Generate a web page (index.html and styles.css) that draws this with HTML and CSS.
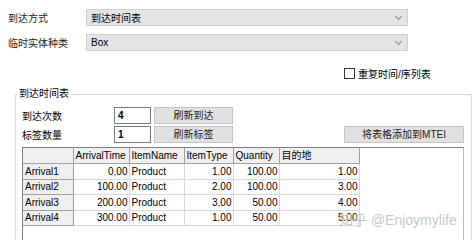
FILE: index.html
```html
<!DOCTYPE html>
<html lang="zh-CN">
<head>
    <meta charset="UTF-8">
    <title>到达时间表</title>
    <link rel="stylesheet" href="styles.css">
</head>
<body>

    <div class="form-row first">
        <span class="label">到达方式</span>
        <div class="combo"><span>到达时间表</span><span class="chevron"></span></div>
    </div>
    <div class="form-row">
        <span class="label">临时实体种类</span>
        <div class="combo"><span>Box</span><span class="chevron"></span></div>
    </div>

    <div class="check-row">
        <span class="checkbox"></span>
        <span>重复时间/序列表</span>
    </div>

    <!-- Group box -->
    <div class="group">
        <span class="group-title">到达时间表</span>

        <div class="group-row">
            <span class="small-label">到达次数</span>
            <div class="spin">4</div>
            <div class="button refresh">刷新到达</div>
        </div>
        <div class="group-row">
            <span class="small-label">标签数量</span>
            <div class="spin">1</div>
            <div class="button refresh">刷新标签</div>
            <div class="button wide">将表格添加到MTEI</div>
        </div>

        <div class="table-box">
            <table class="grid">
                <colgroup>
                    <col class="c0"><col class="c1"><col class="c2"><col class="c3"><col class="c4"><col class="c5">
                </colgroup>
                <tr class="head">
                    <th></th><th>ArrivalTime</th><th>ItemName</th><th>ItemType</th><th>Quantity</th><th>目的地</th>
                </tr>
                <tr><th>Arrival1</th><td class="num">0.00</td><td>Product</td><td class="num">1.00</td><td class="num">100.00</td><td class="num">1.00</td></tr>
                <tr><th>Arrival2</th><td class="num">100.00</td><td>Product</td><td class="num">2.00</td><td class="num">100.00</td><td class="num">3.00</td></tr>
                <tr><th>Arrival3</th><td class="num">200.00</td><td>Product</td><td class="num">3.00</td><td class="num">50.00</td><td class="num">4.00</td></tr>
                <tr><th>Arrival4</th><td class="num">300.00</td><td>Product</td><td class="num">1.00</td><td class="num">50.00</td><td class="num">5.00</td></tr>
            </table>
        </div>
    </div>

    <div class="watermark">知乎 @Enjoymylife</div>

</body>
</html>
```

FILE: styles.css
```css
body {
    margin: 0;
    width: 474px;
    height: 240px;
    overflow: hidden;
    position: relative;
    background: #ffffff;
    font-family: "Liberation Sans", "Noto Sans CJK SC", sans-serif;
    font-size: 10px;
    color: #000;
}

.form-row {
    display: flex;
    align-items: center;
    height: 17px;
    margin-top: 8px;
    padding-left: 8px;
}

.form-row.first {
    margin-top: 9px;
}

.label {
    width: 78px;
    color: #1a1a1a;
}

.combo {
    width: 313px;
    height: 15px;
    border: 1px solid #cfcfcf;
    background: #e4e4e4;
    display: flex;
    align-items: center;
    justify-content: space-between;
    padding-left: 3px;
    padding-right: 4px;
}

.combo span:first-child {
    margin-left: 1px;
}

.chevron {
    width: 4px;
    height: 4px;
    border-right: 1px solid #8a8a8a;
    border-bottom: 1px solid #8a8a8a;
    transform: rotate(45deg);
    margin-top: -3px;
    margin-right: 2px;
}

/* Checkbox row */
.check-row {
    display: flex;
    align-items: center;
    gap: 3px;
    margin-top: 17px;
    padding-left: 344px;
    height: 11px;
}

.checkbox {
    width: 9px;
    height: 9px;
    border: 1px solid #333;
    background: #fff;
}

/* Group box */
.group {
    margin-top: 15px;
    margin-left: 15px;
    width: 455px;
    height: 145px;
    border: 1px solid #dcdcdc;
    border-bottom: none;
    position: relative;
}

.group-title {
    position: absolute;
    top: -7px;
    left: 2px;
    padding: 0 1px;
    background: #fff;
    line-height: 12px;
}

.group-row {
    display: flex;
    align-items: center;
    height: 17px;
    margin-left: 6px;
}

.group-row:first-of-type {
    margin-top: 12px;
}

.group-row + .group-row {
    margin-top: 2px;
}

.small-label {
    width: 92px;
}

.spin {
    width: 32px;
    height: 15px;
    border: 1px solid #7a7a7a;
    background: #fff;
    padding-left: 3px;
    line-height: 15px;
    font-weight: bold;
}

.button {
    height: 15px;
    border: 1px solid #c4c4c4;
    background: #e1e1e1;
    text-align: center;
    line-height: 15px;
    color: #222;
}

.refresh {
    width: 77px;
    margin-left: 3px;
}

.wide {
    width: 118px;
    margin-left: auto;
    margin-right: 7px;
}

/* Table widget */
.table-box {
    margin-top: 4px;
    margin-left: 6px;
    width: 440px;
    height: 92px;
    border-top: 1px solid #7d7d7d;
    border-left: 1px solid #7d7d7d;
    border-right: 1px solid #b9b9b9;
}

.grid {
    border-collapse: collapse;
    table-layout: fixed;
    width: 336px;
    font-family: "Liberation Sans", "Noto Sans CJK SC", sans-serif;
    font-size: 10px;
}

.c0 { width: 50px; }
.c1 { width: 56px; }
.c2 { width: 55px; }
.c3 { width: 49px; }
.c4 { width: 46px; }
.c5 { width: 80px; }

.grid tr {
    height: 15.5px;
}

.grid th,
.grid td {
    padding: 0 1px 0 2px;
    border: 1px solid #d9d9d9;
    white-space: nowrap;
    overflow: hidden;
    font-weight: normal;
    text-align: left;
    line-height: 13px;
}

.grid th {
    background: #f0f0f0;
    border-color: #a0a0a0;
    border-top-color: #f0f0f0;
    border-left-color: #f0f0f0;
}

.grid tr.head th {
    border-top: none;
}

.grid tr th:first-child {
    border-left: none;
}

.grid td.num {
    text-align: right;
}

.watermark {
    position: absolute;
    left: 339px;
    top: 209px;
    font-family: "Liberation Sans", "Noto Sans CJK SC", sans-serif;
    font-size: 14px;
    color: rgba(150, 150, 150, 0.55);
    text-shadow: 0 0 1px rgba(255, 255, 255, 0.8);
}
```
